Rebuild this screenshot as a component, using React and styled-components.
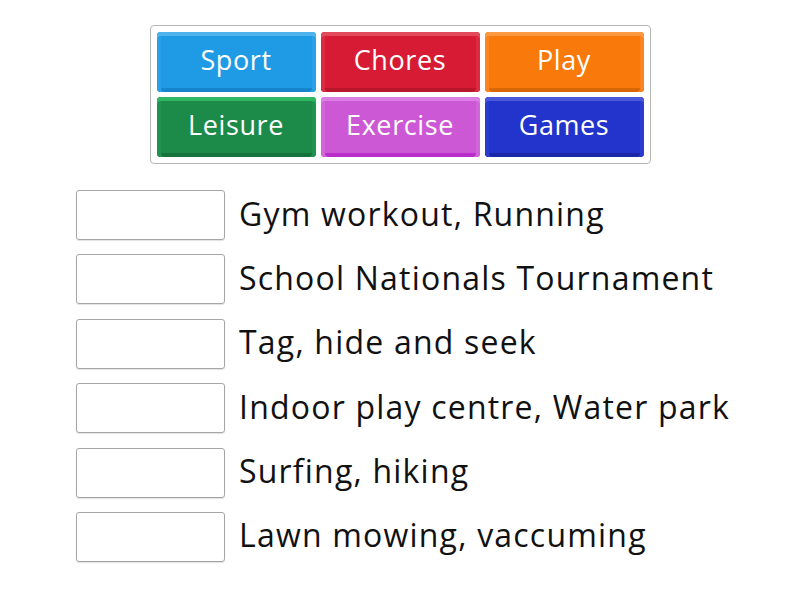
import React from "react";
import styled, { createGlobalStyle } from "styled-components";

const Global = createGlobalStyle`
  html, body { margin: 0; padding: 0; background: #fff; }
  body { font-family: "Open Sans", "Noto Sans", sans-serif; }
`;

const Page = styled.div`
  width: 800px;
  height: 600px;
  display: flex;
  flex-direction: column;
  align-items: center;
  padding-top: 25px;
  box-sizing: border-box;
`;

const Bank = styled.div`
  display: grid;
  grid-template-columns: repeat(3, 159px);
  grid-auto-rows: 60px;
  gap: 5px;
  padding: 6px;
  border: 1px solid #b5b5b5;
  border-radius: 4px;
`;

const Tile = styled.div`
  display: flex;
  align-items: center;
  justify-content: center;
  padding-bottom: 5px;
  box-sizing: border-box;
  border-radius: 4px;
  background: ${(p) => p.$bg};
  color: #fff;
  font-size: 27px;
  font-weight: 500;
  letter-spacing: 0.6px;
  box-shadow:
    inset 0 4px 0 ${(p) => p.$hi},
    inset 4px 0 0 ${(p) => p.$side},
    inset -4px 0 0 ${(p) => p.$side},
    inset 0 -4px 0 ${(p) => p.$lo};
`;

const List = styled.div`
  align-self: flex-start;
  margin-left: 76px;
  margin-top: 26px;
  display: flex;
  flex-direction: column;
  gap: 14.4px;
`;

const Row = styled.div`
  display: flex;
  align-items: center;
  height: 50px;
`;

const Slot = styled.div`
  width: 147px;
  height: 48px;
  border: 1px solid #a6a6a6;
  border-radius: 3px;
  box-shadow: 0 1px 1px rgba(0, 0, 0, 0.12);
  flex-shrink: 0;
`;

const Label = styled.div`
  margin-left: 14px;
  margin-top: -4px;
  font-size: 32px;
  letter-spacing: 1.2px;
  color: #111;
  white-space: nowrap;
`;

const tiles = [
  { t: "Sport", bg: "#1f9be6", hi: "#4fb3ee", side: "#2aa0e8", lo: "#1785cc" },
  { t: "Chores", bg: "#d81b34", hi: "#e24a5c", side: "#dc2a41", lo: "#b8162b" },
  { t: "Play", bg: "#f97a0b", hi: "#fb9840", side: "#fa8420", lo: "#d86806" },
  { t: "Leisure", bg: "#1c8a48", hi: "#2fb863", side: "#209250", lo: "#16723b" },
  { t: "Exercise", bg: "#cc58d6", hi: "#db80e2", side: "#d066da", lo: "#b92dca" },
  { t: "Games", bg: "#2234cc", hi: "#4a57d8", side: "#2a3bd0", lo: "#1a28a8" },
];

const items = [
  "Gym workout, Running",
  "School Nationals Tournament",
  "Tag, hide and seek",
  "Indoor play centre, Water park",
  "Surfing, hiking",
  "Lawn mowing, vaccuming",
];

export default function App() {
  return (
    <Page>
      <Global />
      <Bank>
        {tiles.map((x) => (
          <Tile key={x.t} $bg={x.bg} $hi={x.hi} $side={x.side} $lo={x.lo}>
            {x.t}
          </Tile>
        ))}
      </Bank>
      <List>
        {items.map((t) => (
          <Row key={t}>
            <Slot />
            <Label>{t}</Label>
          </Row>
        ))}
      </List>
    </Page>
  );
}
